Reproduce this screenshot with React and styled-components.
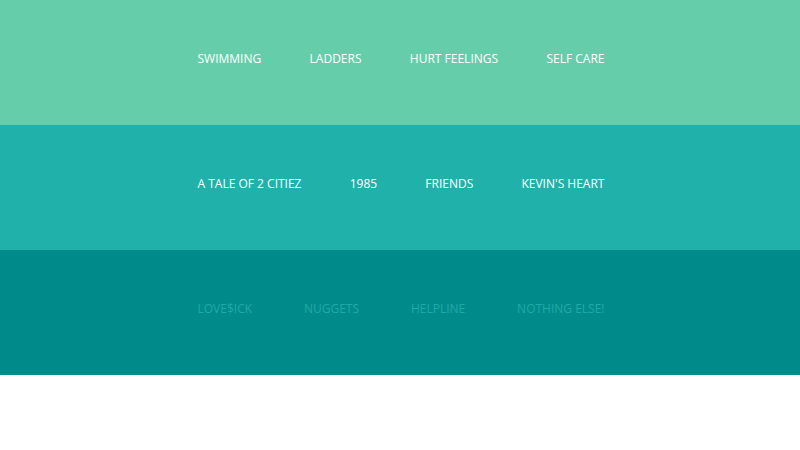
import React from "react";
import styled, { createGlobalStyle } from "styled-components";

const Global = createGlobalStyle`
  html, body { margin: 0; padding: 0; background: #fff; }
  body { font-family: "Open Sans", "Liberation Sans", sans-serif; }
`;

const Band = styled.nav`
  height: 125px;
  background: ${(p) => p.$bg};
  display: flex;
  align-items: center;
  justify-content: center;
  padding: 0 0 8px 2px;
  box-sizing: border-box;
`;

const Menu = styled.ul`
  list-style: none;
  margin: 0;
  padding: 0;
  width: 407px;
  display: flex;
  justify-content: space-between;
`;

const Item = styled.li`
  font-size: 12px;
  line-height: 18px;
  text-transform: uppercase;
  color: ${(p) => p.$fg};
  white-space: nowrap;
`;

const bands = [
  { bg: "#66cdaa", fg: "#ffffff", items: ["Swimming", "Ladders", "Hurt Feelings", "Self Care"] },
  { bg: "#20b2aa", fg: "#ffffff", items: ["A Tale of 2 Citiez", "1985", "Friends", "Kevin's Heart"] },
  { bg: "#008b8b", fg: "#22a8a5", items: ["Love$ick", "Nuggets", "Helpline", "Nothing Else!"] },
];

const App = () => (
  <>
    <Global />
    {bands.map((b, i) => (
      <Band key={i} $bg={b.bg}>
        <Menu>
          {b.items.map((t) => (
            <Item key={t} $fg={b.fg}>{t}</Item>
          ))}
        </Menu>
      </Band>
    ))}
  </>
);

export default App;
